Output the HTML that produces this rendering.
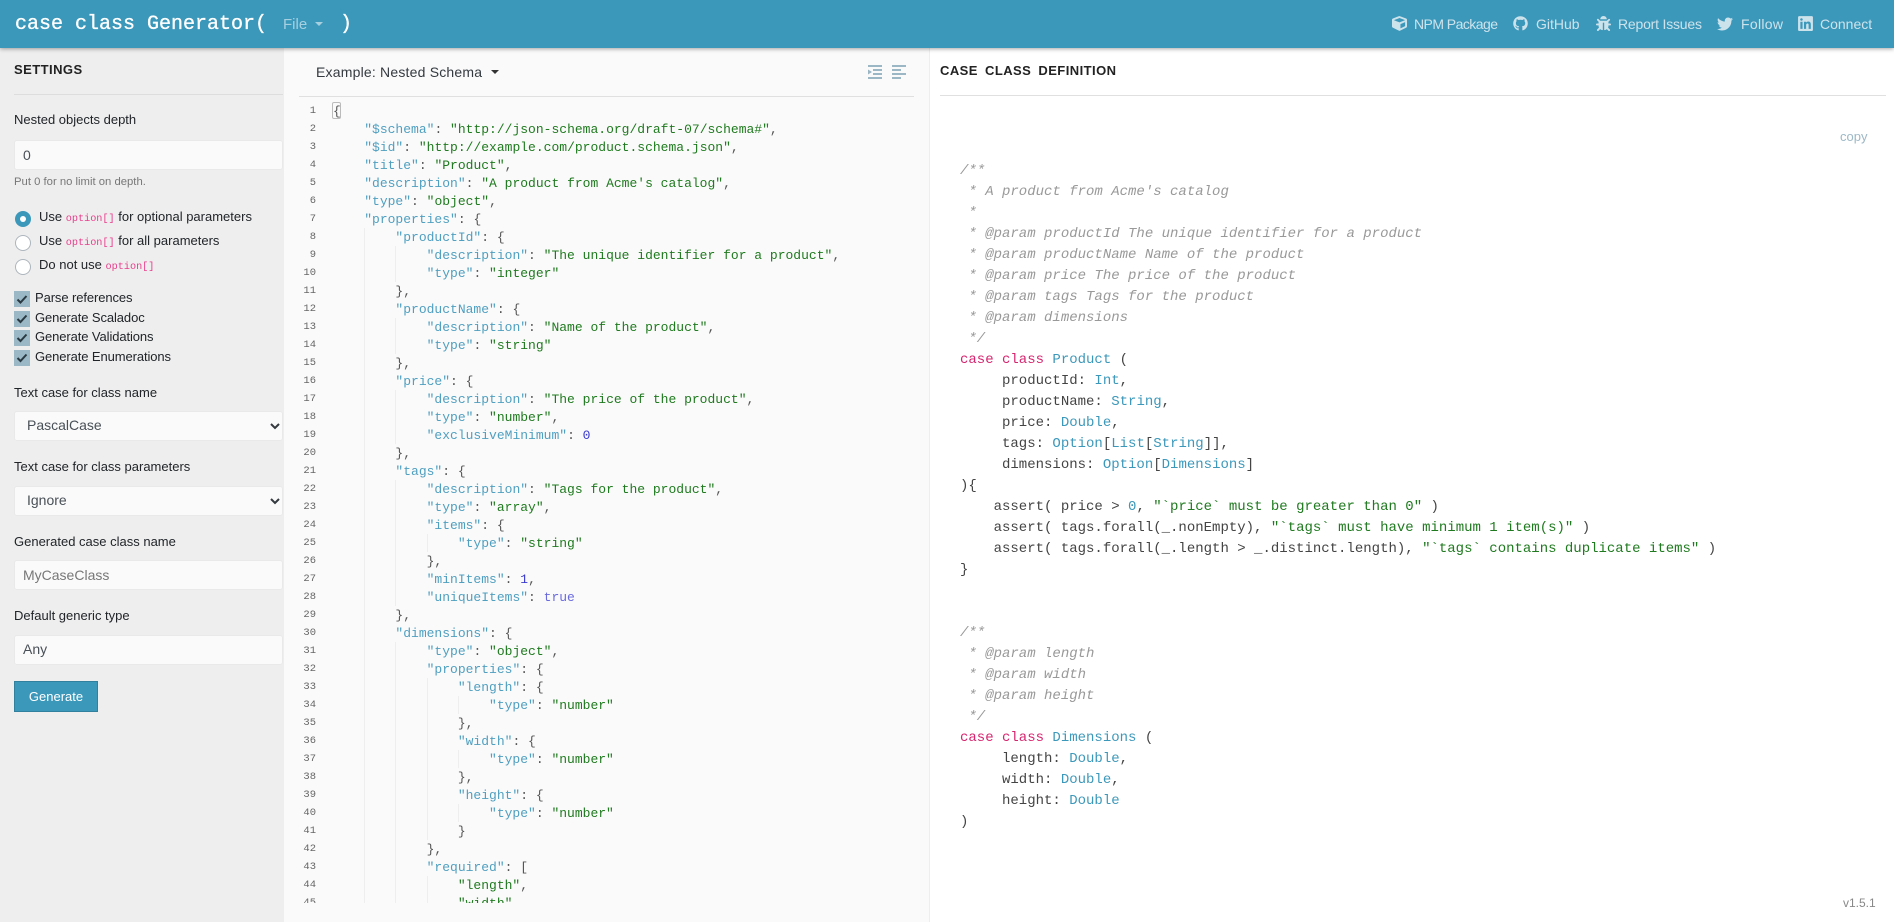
<!DOCTYPE html>
<html lang="en"><head><meta charset="utf-8"><title>case class Generator</title>
<style>
*{box-sizing:border-box}
html,body{margin:0;padding:0;width:1894px;height:922px;overflow:hidden;background:#fff;font-family:"Liberation Sans",sans-serif;color:#212529}
.a{position:absolute;white-space:nowrap}
.t{position:absolute;white-space:nowrap;line-height:20px;font-size:13px;color:#212529}
header{position:absolute;left:0;top:0;width:1894px;height:48px;background:#3c98ba;box-shadow:0 1px 4px rgba(0,0,0,.35);z-index:5}
.m{font-family:"Liberation Mono",monospace}
.nav{position:absolute;top:14px;line-height:20px;font-size:14px;color:#cde3ec;white-space:nowrap}
header svg{position:absolute;fill:#cde3ec}
.side{position:absolute;left:0;top:48px;width:284px;height:874px;background:#eee}
.ed{position:absolute;left:284px;top:48px;width:646px;height:874px;background:#fafafa}
.rt{position:absolute;left:929px;top:48px;width:965px;height:874px;background:#fff;border-left:1px solid #eee}
.hr{position:absolute;height:1px;background:#e0e0e0}
.inp{position:absolute;left:14px;width:269px;height:30px;background:#fafafa;border:1px solid #e9e9e9;border-radius:3px;font-size:14px;line-height:28px;padding-left:8px;color:#495057}
.up{line-height:27px}
.sel{padding-left:12px}
.sel svg{position:absolute;left:255px;top:10px}
.radio{position:absolute;left:15px;width:16px;height:16px;border-radius:50%;background:#fff;border:1px solid #adb5bd}
.radio.on{background:#3c98ba;border:0}
.radio.on:after{content:"";position:absolute;left:5px;top:5px;width:6px;height:6px;border-radius:50%;background:#fff}
.cb{position:absolute;left:14px;width:16px;height:16px;background:#9ab8c6}
.cb svg{position:absolute;left:0;top:0}
code{font-family:"Liberation Mono",monospace;font-size:10.2px;color:#e83e8c}
pre{margin:0;font-family:"Liberation Mono",monospace}
#code{position:absolute;left:333px;top:103px;width:596px;height:800px;overflow:hidden;font-size:13px;line-height:18px;color:#555}
#nums{position:absolute;left:295px;top:102px;width:21px;height:801px;overflow:hidden;font-size:10.5px;line-height:18px;color:#666;text-align:right}
.k{color:#4f9fc0}.s{color:#1f7a1f}.n{color:#3a3ad0}.b{color:#6a6ae0}
.g{position:absolute;width:1px;background:#eeeeee}
#out{position:absolute;left:960px;top:161px;font-size:14px;line-height:21px;color:#444}
#out .c{color:#999;font-style:italic}
#out .w{color:#d6246e}
#out .y{color:#3c98ba}
#out .s{color:#1f7a1f}
</style></head><body>
<header>
<div class="a m" style="left:15px;top:12px;font-size:20px;line-height:26px;color:#fff;-webkit-text-stroke:.3px #fff">case class Generator(</div>
<div class="a" style="left:283px;top:15px;font-size:15px;line-height:20px;color:#a6d0e0">File</div>
<div class="a" style="left:315px;top:22px;width:0;height:0;border-left:4px solid transparent;border-right:4px solid transparent;border-top:4px solid #a6d0e0"></div>
<div class="a m" style="left:340px;top:12px;font-size:20px;line-height:26px;color:#fff;-webkit-text-stroke:.3px #fff">)</div>
<svg style="left:1392px;top:16px" width="15" height="15" viewBox="0 0 512 512"><path d="M239.1 6.3l-208 78c-18.7 7-31.1 25-31.1 45v225.1c0 18.2 10.3 34.8 26.5 42.9l208 104c13.5 6.8 29.4 6.8 42.9 0l208-104c16.3-8.1 26.5-24.8 26.5-42.9V129.3c0-20-12.4-37.9-31.1-44.9l-208-78C262 2.2 250 2.2 239.1 6.3zM256 68.4l192 72v1.1l-192 78-192-78v-1.1l192-72zm32 356V275.5l160-65v133.9l-160 80z"/></svg>
<div class="nav" style="left:1414px;letter-spacing:-.55px">NPM Package</div>
<svg style="left:1513px;top:16px" width="15" height="15" viewBox="0 0 496 512"><path d="M165.9 397.4c0 2-2.3 3.6-5.2 3.6-3.3.3-5.6-1.3-5.6-3.6 0-2 2.3-3.6 5.2-3.6 3-.3 5.6 1.3 5.6 3.6zm-31.1-4.5c-.7 2 1.3 4.3 4.3 4.9 2.6 1 5.6 0 6.2-2s-1.3-4.3-4.3-5.2c-2.6-.7-5.5.3-6.2 2.3zm44.2-1.7c-2.9.7-4.9 2.6-4.6 4.9.3 2 2.9 3.3 5.9 2.6 2.9-.7 4.9-2.6 4.6-4.6-.3-1.9-3-3.2-5.9-2.9zM244.8 8C106.1 8 0 113.3 0 252c0 110.9 69.8 205.8 169.5 239.2 12.8 2.3 17.3-5.6 17.3-12.1 0-6.2-.3-40.4-.3-61.4 0 0-70 15-84.7-29.8 0 0-11.4-29.1-27.8-36.6 0 0-22.9-15.7 1.6-15.4 0 0 24.9 2 38.6 25.8 21.9 38.6 58.6 27.5 72.9 20.9 2.3-16 8.8-27.1 16-33.7-55.9-6.2-112.3-14.3-112.3-110.5 0-27.5 7.6-41.3 23.6-58.9-2.6-6.5-11.1-33.3 2.6-67.9 20.9-6.5 69 27 69 27 20-5.6 41.5-8.5 62.8-8.5s42.8 2.9 62.8 8.5c0 0 48.1-33.6 69-27 13.7 34.7 5.2 61.4 2.6 67.9 16 17.7 25.8 31.5 25.8 58.9 0 96.5-58.9 104.2-114.8 110.5 9.2 7.9 17 22.9 17 46.4 0 33.7-.3 75.4-.3 83.6 0 6.5 4.6 14.4 17.3 12.1C428.2 457.8 496 362.9 496 252 496 113.3 383.5 8 244.8 8z"/></svg>
<div class="nav" style="left:1536px">GitHub</div>
<svg style="left:1596px;top:16px" width="15" height="15" viewBox="0 0 512 512"><path d="M511.988 288.9c-.478 17.43-15.217 31.1-32.653 31.1H424v16c0 21.864-4.882 42.584-13.6 61.145l60.228 60.228c12.496 12.497 12.496 32.758 0 45.255-12.498 12.497-32.759 12.496-45.256 0l-54.736-54.736C345.886 467.965 314.351 480 280 480V236c0-6.627-5.373-12-12-12h-24c-6.627 0-12 5.373-12 12v244c-34.351 0-65.886-12.035-90.636-32.108l-54.736 54.736c-12.498 12.497-32.759 12.496-45.256 0-12.496-12.497-12.496-32.758 0-45.255l60.228-60.228C92.882 378.584 88 357.864 88 336v-16H32.666C15.23 320 .491 306.33.013 288.9-.484 270.816 14.028 256 32 256h56v-58.745l-46.628-46.628c-12.496-12.497-12.496-32.758 0-45.255 12.498-12.497 32.758-12.497 45.256 0L141.255 160h229.489l54.627-54.627c12.498-12.497 32.758-12.497 45.256 0 12.496 12.497 12.496 32.758 0 45.255L424 197.255V256h56c17.972 0 32.484 14.816 31.988 32.9zM257 0c-61.856 0-112 50.144-112 112h224C369 50.144 318.856 0 257 0z"/></svg>
<div class="nav" style="left:1618px;letter-spacing:-.2px">Report Issues</div>
<svg style="left:1717px;top:16px" width="16" height="16" viewBox="0 0 512 512"><path d="M459.37 151.716c.325 4.548.325 9.097.325 13.645 0 138.72-105.583 298.558-298.558 298.558-59.452 0-114.68-17.219-161.137-47.106 8.447.974 16.568 1.299 25.34 1.299 49.055 0 94.213-16.568 130.274-44.832-46.132-.975-84.792-31.188-98.112-72.772 6.498.974 12.995 1.624 19.818 1.624 9.421 0 18.843-1.3 27.614-3.573-48.081-9.747-84.143-51.98-84.143-102.985v-1.299c13.969 7.797 30.214 12.67 47.431 13.319-28.264-18.843-46.781-51.005-46.781-87.391 0-19.492 5.197-37.36 14.294-52.954 51.655 63.675 129.3 105.258 216.365 109.807-1.624-7.797-2.599-15.918-2.599-24.04 0-57.828 46.782-104.934 104.934-104.934 30.213 0 57.502 12.67 76.67 33.137 23.715-4.548 46.456-13.32 66.599-25.34-7.798 24.366-24.366 44.833-46.132 57.827 21.117-2.273 41.584-8.122 60.426-16.243-14.292 20.791-32.161 39.308-52.628 54.253z"/></svg>
<div class="nav" style="left:1741px;letter-spacing:.3px">Follow</div>
<svg style="left:1798px;top:15px" width="15" height="17" viewBox="0 0 448 512"><path d="M416 32H31.9C14.3 32 0 46.5 0 64.3v383.4C0 465.5 14.3 480 31.9 480H416c17.6 0 32-14.5 32-32.3V64.3c0-17.8-14.4-32.3-32-32.3zM135.4 416H69V202.2h66.5V416zm-33.2-243c-21.3 0-38.5-17.3-38.5-38.5S80.9 96 102.2 96c21.2 0 38.5 17.3 38.5 38.5 0 21.3-17.2 38.5-38.5 38.5zm282.1 243h-66.4V312c0-24.8-.5-56.7-34.5-56.7-34.6 0-39.9 27-39.9 54.9V416h-66.4V202.2h63.7v29.2h.9c8.9-16.8 30.6-34.5 62.9-34.5 67.2 0 79.7 44.3 79.7 101.9V416z"/></svg>
<div class="nav" style="left:1820px">Connect</div>
</header>

<div class="side"></div>
<div class="ed"></div>
<div class="rt"></div>

<div class="t" style="left:14px;top:60px;font-size:13px;font-weight:bold;letter-spacing:.45px;color:#222">SETTINGS</div>
<div class="hr" style="left:14px;top:94px;width:269px;background:#ddd"></div>
<div class="t" style="left:14px;top:110px">Nested objects depth</div>
<div class="inp" style="top:140px">0</div>
<div class="t" style="left:14px;top:172px;font-size:11.3px;color:#777">Put 0 for no limit on depth.</div>

<div class="radio on" style="top:211px"></div>
<div class="t" style="left:39px;top:207px">Use <code>option[]</code> for optional parameters</div>
<div class="radio" style="top:235px"></div>
<div class="t" style="left:39px;top:231px">Use <code>option[]</code> for all parameters</div>
<div class="radio" style="top:259px"></div>
<div class="t" style="left:39px;top:255px">Do not use <code>option[]</code></div>

<div class="cb" style="top:291px"><svg width="16" height="16"><path d="M3.5 8.5l3 3 6-6.5" fill="none" stroke="#2b3a42" stroke-width="2"/></svg></div>
<div class="t" style="left:35px;top:288px;letter-spacing:-.1px">Parse references</div>
<div class="cb" style="top:311px"><svg width="16" height="16"><path d="M3.5 8l3 3 6-6.5" fill="none" stroke="#2b3a42" stroke-width="2"/></svg></div>
<div class="t" style="left:35px;top:308px;letter-spacing:-.1px">Generate Scaladoc</div>
<div class="cb" style="top:330px"><svg width="16" height="16"><path d="M3.5 8l3 3 6-6.5" fill="none" stroke="#2b3a42" stroke-width="2"/></svg></div>
<div class="t" style="left:35px;top:327px;letter-spacing:-.1px">Generate Validations</div>
<div class="cb" style="top:350px"><svg width="16" height="16"><path d="M3.5 8l3 3 6-6.5" fill="none" stroke="#2b3a42" stroke-width="2"/></svg></div>
<div class="t" style="left:35px;top:347px;letter-spacing:-.1px">Generate Enumerations</div>

<div class="t" style="left:14px;top:383px">Text case for class name</div>
<div class="inp sel up" style="top:411px">PascalCase<svg width="10" height="8" viewBox="0 0 10 8"><path d="M1 2l4 4 4-4" fill="none" stroke="#343a40" stroke-width="2"/></svg></div>
<div class="t" style="left:14px;top:457px">Text case for class parameters</div>
<div class="inp sel up" style="top:486px">Ignore<svg width="10" height="8" viewBox="0 0 10 8"><path d="M1 2l4 4 4-4" fill="none" stroke="#343a40" stroke-width="2"/></svg></div>
<div class="t" style="left:14px;top:532px">Generated case class name</div>
<div class="inp" style="top:560px;color:#777">MyCaseClass</div>
<div class="t" style="left:14px;top:606px">Default generic type</div>
<div class="inp up" style="top:635px">Any</div>
<div class="a" style="left:14px;top:681px;width:84px;height:31px;background:#3c98ba;border:1px solid #31809e;color:#fff;font-size:13px;line-height:29px;text-align:center">Generate</div>

<div class="t" style="left:316px;top:62px;font-size:14px;letter-spacing:.2px;color:#343a40">Example: Nested Schema</div>
<div class="a" style="left:491px;top:70px;width:0;height:0;border-left:4.5px solid transparent;border-right:4.5px solid transparent;border-top:4.5px solid #333"></div>
<svg class="a" style="left:868px;top:65px" width="15" height="15" viewBox="0 0 15 15" fill="#9bb6c4"><rect x="0" y="0" width="14" height="2"/><rect x="5" y="4" width="9" height="2"/><rect x="5" y="8" width="9" height="2"/><rect x="0" y="12" width="14" height="2"/><path d="M0 4.5l4 2.5-4 2.5z"/></svg>
<svg class="a" style="left:892px;top:65px" width="15" height="15" viewBox="0 0 15 15" fill="#9bb6c4"><rect x="0" y="0" width="14" height="2"/><rect x="0" y="4" width="9" height="2"/><rect x="0" y="8" width="14" height="2"/><rect x="0" y="12" width="9" height="2"/></svg>
<div class="hr" style="left:299px;top:96px;width:615px"></div>

<div class="g" style="left:364px;top:228px;height:675px"></div>
<div class="g" style="left:395px;top:246px;height:36px"></div>
<div class="g" style="left:395px;top:318px;height:36px"></div>
<div class="g" style="left:395px;top:390px;height:54px"></div>
<div class="g" style="left:395px;top:480px;height:126px"></div>
<div class="g" style="left:395px;top:642px;height:261px"></div>
<div class="g" style="left:427px;top:534px;height:18px"></div>
<div class="g" style="left:427px;top:678px;height:162px"></div>
<div class="g" style="left:427px;top:876px;height:27px"></div>
<div class="g" style="left:458px;top:696px;height:18px"></div>
<div class="g" style="left:458px;top:750px;height:18px"></div>
<div class="g" style="left:458px;top:804px;height:18px"></div>
<div class="a" style="left:332px;top:102px;width:9px;height:17px;border:1px solid #bbb;border-radius:2px"></div>

<pre id="nums">1
2
3
4
5
6
7
8
9
10
11
12
13
14
15
16
17
18
19
20
21
22
23
24
25
26
27
28
29
30
31
32
33
34
35
36
37
38
39
40
41
42
43
44
45</pre>
<pre id="code">{
    <span class="k">"$schema"</span>: <span class="s">"http://json-schema.org/draft-07/schema#"</span>,
    <span class="k">"$id"</span>: <span class="s">"http://example.com/product.schema.json"</span>,
    <span class="k">"title"</span>: <span class="s">"Product"</span>,
    <span class="k">"description"</span>: <span class="s">"A product from Acme's catalog"</span>,
    <span class="k">"type"</span>: <span class="s">"object"</span>,
    <span class="k">"properties"</span>: {
        <span class="k">"productId"</span>: {
            <span class="k">"description"</span>: <span class="s">"The unique identifier for a product"</span>,
            <span class="k">"type"</span>: <span class="s">"integer"</span>
        },
        <span class="k">"productName"</span>: {
            <span class="k">"description"</span>: <span class="s">"Name of the product"</span>,
            <span class="k">"type"</span>: <span class="s">"string"</span>
        },
        <span class="k">"price"</span>: {
            <span class="k">"description"</span>: <span class="s">"The price of the product"</span>,
            <span class="k">"type"</span>: <span class="s">"number"</span>,
            <span class="k">"exclusiveMinimum"</span>: <span class="n">0</span>
        },
        <span class="k">"tags"</span>: {
            <span class="k">"description"</span>: <span class="s">"Tags for the product"</span>,
            <span class="k">"type"</span>: <span class="s">"array"</span>,
            <span class="k">"items"</span>: {
                <span class="k">"type"</span>: <span class="s">"string"</span>
            },
            <span class="k">"minItems"</span>: <span class="n">1</span>,
            <span class="k">"uniqueItems"</span>: <span class="b">true</span>
        },
        <span class="k">"dimensions"</span>: {
            <span class="k">"type"</span>: <span class="s">"object"</span>,
            <span class="k">"properties"</span>: {
                <span class="k">"length"</span>: {
                    <span class="k">"type"</span>: <span class="s">"number"</span>
                },
                <span class="k">"width"</span>: {
                    <span class="k">"type"</span>: <span class="s">"number"</span>
                },
                <span class="k">"height"</span>: {
                    <span class="k">"type"</span>: <span class="s">"number"</span>
                }
            },
            <span class="k">"required"</span>: [
                <span class="s">"length"</span>,
                <span class="s">"width"</span>,</pre>

<div class="t" style="left:940px;top:61px;font-size:13px;font-weight:bold;letter-spacing:.45px;word-spacing:3px;color:#222">CASE CLASS DEFINITION</div>
<div class="hr" style="left:940px;top:95px;width:946px"></div>
<div class="t" style="left:1840px;top:127px;color:#9db8c6">copy</div>

<pre id="out"><span class="c">/**
 * A product from Acme's catalog
 *
 * @param productId The unique identifier for a product
 * @param productName Name of the product
 * @param price The price of the product
 * @param tags Tags for the product
 * @param dimensions
 */</span>
<span class="w">case class</span> <span class="y">Product</span> (
     productId: <span class="y">Int</span>,
     productName: <span class="y">String</span>,
     price: <span class="y">Double</span>,
     tags: <span class="y">Option</span>[<span class="y">List</span>[<span class="y">String</span>]],
     dimensions: <span class="y">Option</span>[<span class="y">Dimensions</span>]
){
    assert( price &gt; <span class="y">0</span>, <span class="s">"`price` must be greater than 0"</span> )
    assert( tags.forall(_.nonEmpty), <span class="s">"`tags` must have minimum 1 item(s)"</span> )
    assert( tags.forall(_.length &gt; _.distinct.length), <span class="s">"`tags` contains duplicate items"</span> )
}


<span class="c">/**
 * @param length
 * @param width
 * @param height
 */</span>
<span class="w">case class</span> <span class="y">Dimensions</span> (
     length: <span class="y">Double</span>,
     width: <span class="y">Double</span>,
     height: <span class="y">Double</span>
)</pre>

<div class="t" style="left:1843px;top:893px;font-size:12px;color:#888">v1.5.1</div>
</body></html>
